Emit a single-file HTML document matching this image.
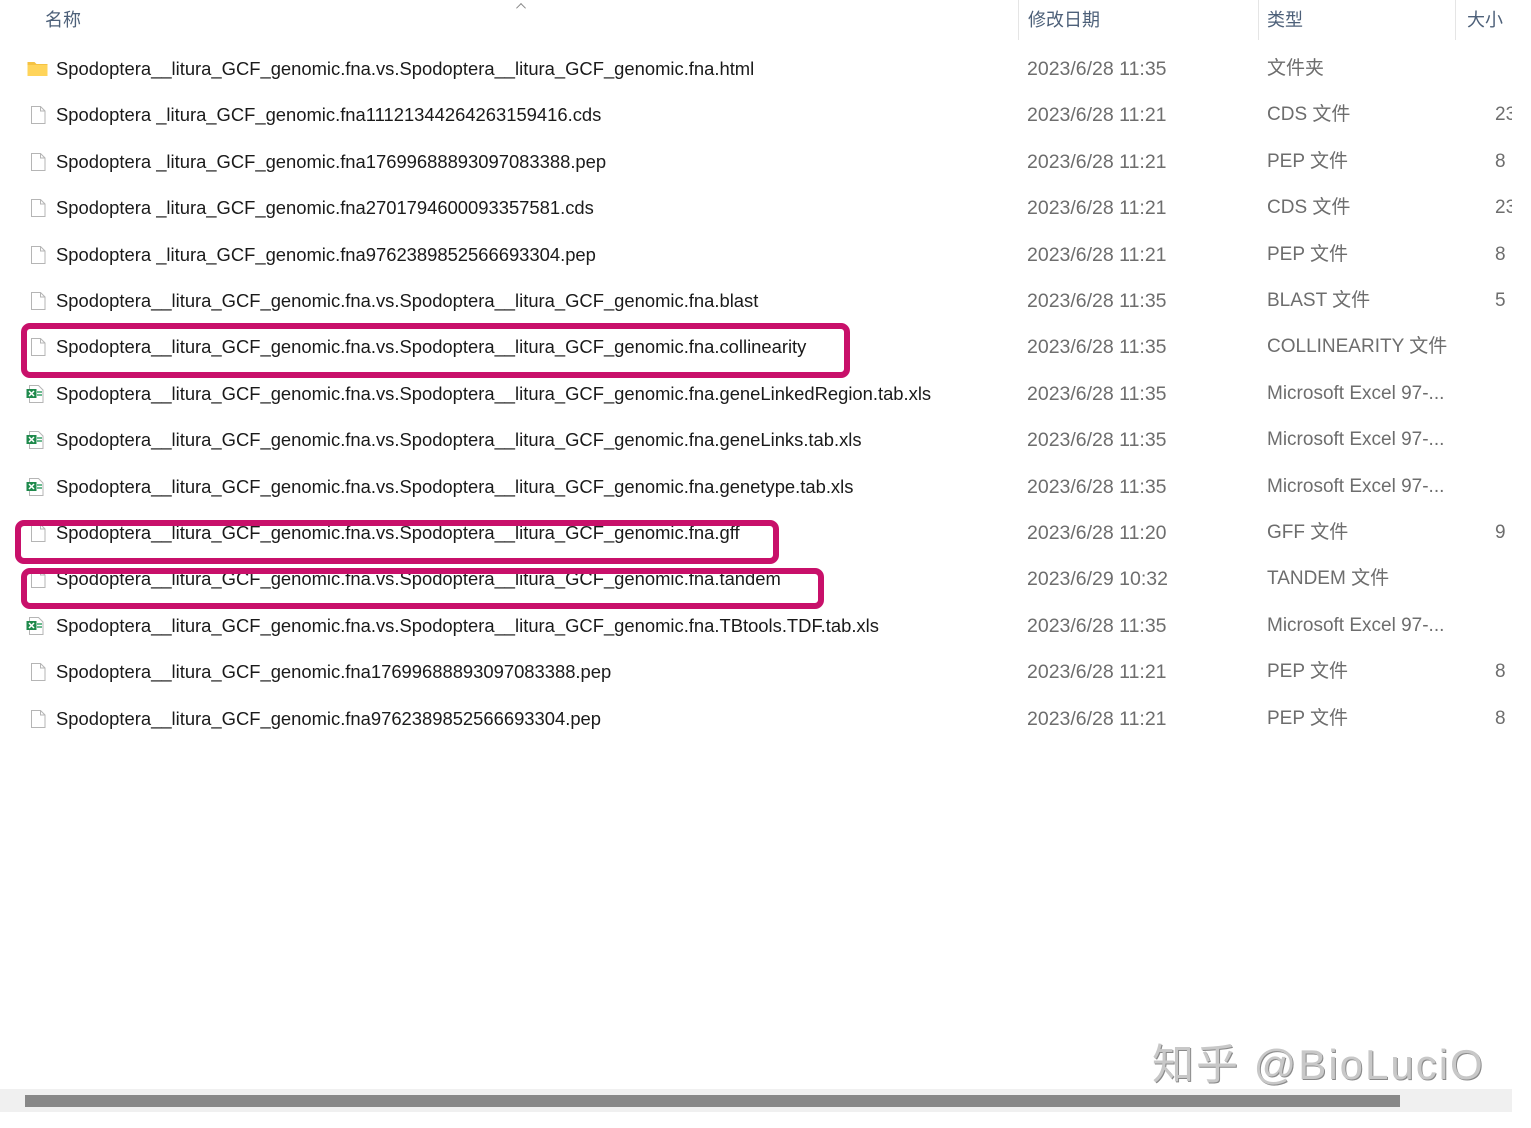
<!DOCTYPE html>
<html><head><meta charset="utf-8"><style>
html,body{margin:0;padding:0;background:#fff;width:1531px;height:1128px;overflow:hidden;position:relative;font-family:"Liberation Sans","Noto Sans CJK SC",sans-serif;}
.h{position:absolute;top:9px;font-size:18px;line-height:22px;color:#4d6079;}
.sep{position:absolute;top:0;width:1px;height:40px;background:#e5e5e5;}
.r{position:absolute;left:0;width:1512px;height:46px;overflow:hidden;font-size:19px;}
.r span{line-height:22px;height:22px;}
.n{position:absolute;left:56px;top:12px;color:#1a1a1a;white-space:nowrap;font-size:18.4px;}
.d{position:absolute;left:1027px;top:12px;color:#6d6d6d;white-space:nowrap;font-size:19.5px;}
.t{position:absolute;left:1267px;top:12px;color:#6d6d6d;white-space:nowrap;}
.s{position:absolute;left:1495px;top:12px;color:#6d6d6d;white-space:nowrap;}
.ic{position:absolute;left:28px;top:12px;}
.box{position:absolute;border:6px solid #c8106a;border-radius:9px;box-sizing:border-box;}
</style></head><body>
<div class="h" style="left:45px">名称</div>
<div style="position:absolute;left:521px;top:3px;width:6px;height:6px;border-left:1.5px solid #888;border-top:1.5px solid #888;transform:rotate(45deg);transform-origin:0 0"></div>
<div class="sep" style="left:1018px"></div>
<div class="h" style="left:1028px">修改日期</div>
<div class="sep" style="left:1258px"></div>
<div class="h" style="left:1267px">类型</div>
<div class="sep" style="left:1455px"></div>
<div class="h" style="left:1467px">大小</div>

<svg width="0" height="0" style="position:absolute">
<defs>
<symbol id="f" viewBox="0 0 20 20"><path d="M3.5 1.5h9l4.5 4.5v12.5h-13.5z" fill="#fff" stroke="#b5b5b5" stroke-width="1"/><path d="M12.5 1.5v4.5h4.5" fill="none" stroke="#b5b5b5"/></symbol>
<symbol id="x" viewBox="0 0 20 20"><path d="M3.5 1.5h9l4.5 4.5v12.5h-13.5z" fill="#fff" stroke="#b5b5b5"/><rect x="0.5" y="5" width="10" height="9" fill="#1f8a4c"/><path d="M3 7l5 5M8 7l-5 5" stroke="#fff" stroke-width="1.5"/><path d="M11 8h5M11 11h5" stroke="#3aa36a" stroke-width="1.5"/></symbol>
<symbol id="d" viewBox="0 0 20 20"><path d="M0 3h7l2 2h11v12h-20z" fill="#f5c242"/><path d="M0 6h20v11h-20z" fill="#ffd45a"/></symbol>
</defs></svg>

<div class="r" style="top:46px"><svg class="ic" style="left:26px;top:13px" width="23" height="20"><use href="#d"/></svg><span class="n">Spodoptera__litura_GCF_genomic.fna.vs.Spodoptera__litura_GCF_genomic.fna.html</span><span class="d">2023/6/28 11:35</span><span class="t">文件夹</span></div>
<div class="r" style="top:92px"><svg class="ic" width="20" height="22"><use href="#f"/></svg><span class="n">Spodoptera _litura_GCF_genomic.fna11121344264263159416.cds</span><span class="d">2023/6/28 11:21</span><span class="t">CDS 文件</span><span class="s">23</span></div>
<div class="r" style="top:139px"><svg class="ic" width="20" height="22"><use href="#f"/></svg><span class="n">Spodoptera _litura_GCF_genomic.fna17699688893097083388.pep</span><span class="d">2023/6/28 11:21</span><span class="t">PEP 文件</span><span class="s">8</span></div>
<div class="r" style="top:185px"><svg class="ic" width="20" height="22"><use href="#f"/></svg><span class="n">Spodoptera _litura_GCF_genomic.fna2701794600093357581.cds</span><span class="d">2023/6/28 11:21</span><span class="t">CDS 文件</span><span class="s">23</span></div>
<div class="r" style="top:232px"><svg class="ic" width="20" height="22"><use href="#f"/></svg><span class="n">Spodoptera _litura_GCF_genomic.fna9762389852566693304.pep</span><span class="d">2023/6/28 11:21</span><span class="t">PEP 文件</span><span class="s">8</span></div>
<div class="r" style="top:278px"><svg class="ic" width="20" height="22"><use href="#f"/></svg><span class="n">Spodoptera__litura_GCF_genomic.fna.vs.Spodoptera__litura_GCF_genomic.fna.blast</span><span class="d">2023/6/28 11:35</span><span class="t">BLAST 文件</span><span class="s">5</span></div>
<div class="r" style="top:324px"><svg class="ic" width="20" height="22"><use href="#f"/></svg><span class="n">Spodoptera__litura_GCF_genomic.fna.vs.Spodoptera__litura_GCF_genomic.fna.collinearity</span><span class="d">2023/6/28 11:35</span><span class="t">COLLINEARITY 文件</span></div>
<div class="r" style="top:371px"><svg class="ic" style="left:26px" width="20" height="22"><use href="#x"/></svg><span class="n">Spodoptera__litura_GCF_genomic.fna.vs.Spodoptera__litura_GCF_genomic.fna.geneLinkedRegion.tab.xls</span><span class="d">2023/6/28 11:35</span><span class="t">Microsoft Excel 97-...</span></div>
<div class="r" style="top:417px"><svg class="ic" style="left:26px" width="20" height="22"><use href="#x"/></svg><span class="n">Spodoptera__litura_GCF_genomic.fna.vs.Spodoptera__litura_GCF_genomic.fna.geneLinks.tab.xls</span><span class="d">2023/6/28 11:35</span><span class="t">Microsoft Excel 97-...</span></div>
<div class="r" style="top:464px"><svg class="ic" style="left:26px" width="20" height="22"><use href="#x"/></svg><span class="n">Spodoptera__litura_GCF_genomic.fna.vs.Spodoptera__litura_GCF_genomic.fna.genetype.tab.xls</span><span class="d">2023/6/28 11:35</span><span class="t">Microsoft Excel 97-...</span></div>
<div class="r" style="top:510px"><svg class="ic" width="20" height="22"><use href="#f"/></svg><span class="n">Spodoptera__litura_GCF_genomic.fna.vs.Spodoptera__litura_GCF_genomic.fna.gff</span><span class="d">2023/6/28 11:20</span><span class="t">GFF 文件</span><span class="s">9</span></div>
<div class="r" style="top:556px"><svg class="ic" width="20" height="22"><use href="#f"/></svg><span class="n">Spodoptera__litura_GCF_genomic.fna.vs.Spodoptera__litura_GCF_genomic.fna.tandem</span><span class="d">2023/6/29 10:32</span><span class="t">TANDEM 文件</span></div>
<div class="r" style="top:603px"><svg class="ic" style="left:26px" width="20" height="22"><use href="#x"/></svg><span class="n">Spodoptera__litura_GCF_genomic.fna.vs.Spodoptera__litura_GCF_genomic.fna.TBtools.TDF.tab.xls</span><span class="d">2023/6/28 11:35</span><span class="t">Microsoft Excel 97-...</span></div>
<div class="r" style="top:649px"><svg class="ic" width="20" height="22"><use href="#f"/></svg><span class="n">Spodoptera__litura_GCF_genomic.fna17699688893097083388.pep</span><span class="d">2023/6/28 11:21</span><span class="t">PEP 文件</span><span class="s">8</span></div>
<div class="r" style="top:696px"><svg class="ic" width="20" height="22"><use href="#f"/></svg><span class="n">Spodoptera__litura_GCF_genomic.fna9762389852566693304.pep</span><span class="d">2023/6/28 11:21</span><span class="t">PEP 文件</span><span class="s">8</span></div>

<div class="box" style="left:21px;top:323px;width:829px;height:55px"></div>
<div class="box" style="left:15px;top:520px;width:764px;height:44px"></div>
<div class="box" style="left:21px;top:568px;width:803px;height:41px"></div>

<div style="position:absolute;left:1152px;top:1041px;font-size:42px;line-height:48px;letter-spacing:2px;color:#c8c8c8;text-shadow:1px 1px 0 #8a8a8a;white-space:nowrap">知乎 @BioLuciO</div>
<div style="position:absolute;left:0;top:1089px;width:1512px;height:23px;background:#f0f0f0"></div>
<div style="position:absolute;left:25px;top:1095px;width:1375px;height:12px;background:#888"></div>
</body></html>
